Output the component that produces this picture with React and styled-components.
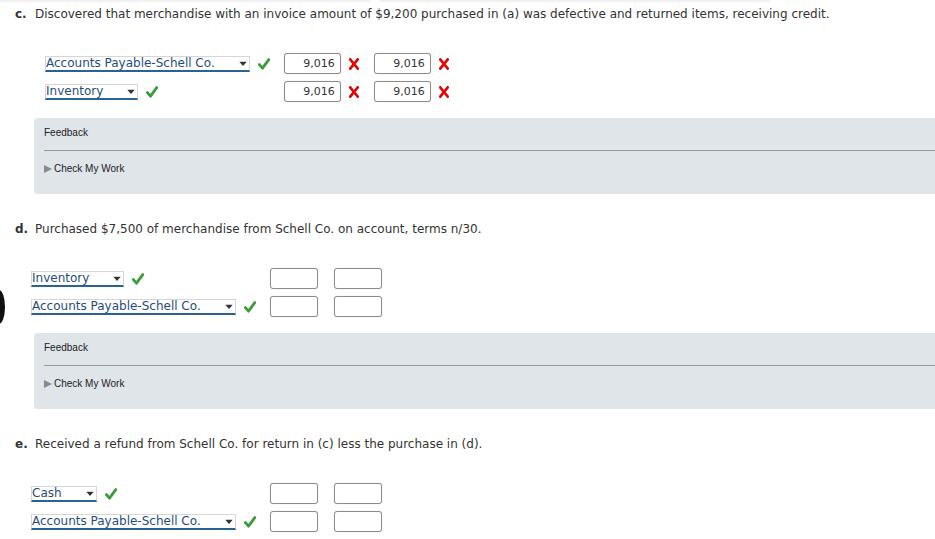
import React from 'react';
import styled, { createGlobalStyle } from 'styled-components';

const GlobalStyle = createGlobalStyle`
    html, body {
        margin: 0;
        padding: 0;
        background: #fff;
        overflow-x: hidden;
    }
    body {
        font-family: "DejaVu Sans", Verdana, sans-serif;
        color: #333;
    }
`;

const Page = styled.div`
    position: relative;
    padding-left: 15px;
    padding-bottom: 20px;
`;

const TopShade = styled.div`
    display: flex;
    gap: 10px;
    height: 3px;
    margin-left: -15px;

    span {
        display: block;
        height: 3px;
        background: linear-gradient(#ececec, #fff);
    }
`;

const Heading = styled.div`
    margin-top: ${(p) => p.$top}px;
    font-size: 12px;
    line-height: 16px;
    color: #333;
    white-space: nowrap;

    b {
        display: inline-block;
        width: 20px;
        font-weight: bold;
    }
`;

const Entries = styled.div`
    display: grid;
    grid-template-columns: auto auto auto;
    justify-content: start;
    align-items: center;
    column-gap: ${(p) => p.$gap}px;
    row-gap: 7px;
    margin-top: 31px;
    margin-left: ${(p) => p.$indent}px;
`;

const AccountCell = styled.div`
    display: flex;
    align-items: center;
    gap: 8px;
    height: 21px;
    margin-right: ${(p) => p.$pad}px;
`;

const Select = styled.div`
    position: relative;
    box-sizing: border-box;
    height: 16px;
    padding: 0 34px 0 0;
    border: 1px solid #d6d6d6;
    border-bottom: 2px solid #2a6292;
    font-size: 12px;
    line-height: 13px;
    color: #1f4d7d;
    white-space: nowrap;

    svg {
        position: absolute;
        right: 2px;
        top: 4px;
    }
`;

const AmountCell = styled.div`
    display: flex;
    align-items: center;
    gap: 8px;
`;

const Amount = styled.div`
    box-sizing: border-box;
    width: ${(p) => p.$w}px;
    height: 21px;
    border: 1px solid #8c8c8c;
    border-radius: 3px;
    box-shadow: 0 0 1px rgba(0, 0, 0, 0.25);
    background: #fff;
    padding-right: 5px;
    text-align: right;
    font-size: 11px;
    line-height: 19px;
    color: #333;
`;

const Feedback = styled.div`
    margin: 16px 0 0 19px;
    margin-right: -15px;
    height: 76px;
    box-sizing: border-box;
    padding: 9px 0 0 10px;
    background: #dfe5e9;
    border-radius: 4px 0 0 4px;
    font-family: "Liberation Sans", Arial, sans-serif;
    font-size: 10px;
    line-height: 12px;
    color: #222;
`;

const Rule = styled.div`
    height: 1px;
    margin-top: 11px;
    background: #959a9d;
`;

const CheckWork = styled.div`
    display: flex;
    align-items: center;
    margin-top: 12px;

    &::before {
        content: '';
        width: 0;
        height: 0;
        margin-right: 2px;
        border-top: 4px solid transparent;
        border-bottom: 4px solid transparent;
        border-left: 8px solid #8a8a8a;
    }
`;

const Bump = styled.div`
    position: absolute;
    left: -7px;
    top: 290px;
    width: 12px;
    height: 34px;
    border-radius: 50%;
    background: #111;
`;

const Arrow = () => (
    <svg width="8" height="6" viewBox="0 0 8 6">
        <path d="M0.5 1 H7.5 L4 5 Z" fill="#333" />
        <path d="M0.5 0.3 H7.5" stroke="#999" strokeWidth="0.6" />
    </svg>
);

const Check = () => (
    <svg width="12" height="12" viewBox="0 0 12 12">
        <path d="M1.4 6.6 L4.5 10.2 L10.8 1.6" fill="none" stroke="#3d9b3d" strokeWidth="2.8" strokeLinecap="round" strokeLinejoin="round" />
    </svg>
);

const Cross = () => (
    <svg width="10" height="12" viewBox="0 0 10 12">
        <path d="M1.3 1.5 L8.7 10.5 M8.7 1.5 L1.3 10.5" stroke="#e60000" strokeWidth="2.7" strokeLinecap="square" />
    </svg>
);

const EntryTable = ({ rows, indent, gap, inputW, value }) => {
    return (
        <Entries $indent={indent} $gap={gap}>
            {rows.map((acct) => (
                <React.Fragment key={acct}>
                    <AccountCell $pad={14 - gap}>
                        <Select>{acct}<Arrow /></Select>
                        <Check />
                    </AccountCell>
                    <AmountCell>
                        <Amount $w={inputW}>{value}</Amount>
                        {value && <Cross />}
                    </AmountCell>
                    <AmountCell>
                        <Amount $w={inputW}>{value}</Amount>
                        {value && <Cross />}
                    </AmountCell>
                </React.Fragment>
            ))}
        </Entries>
    );
};

const FeedbackBox = () => (
    <Feedback>
        <div>Feedback</div>
        <Rule />
        <CheckWork>Check My Work</CheckWork>
    </Feedback>
);

const App = () => {
    return (
        <Page>
            <GlobalStyle />
            <TopShade>
                <span style={{ width: 370 }} />
                <span style={{ width: 390 }} />
            </TopShade>

            <Heading $top={3}>
                <b>c.</b>Discovered that merchandise with an invoice amount of $9,200 purchased in (a) was defective and returned items, receiving credit.
            </Heading>
            <EntryTable
                rows={['Accounts Payable-Schell Co.', 'Inventory']}
                indent={30}
                gap={15}
                inputW={57}
                value="9,016"
            />
            <FeedbackBox />

            <Heading $top={27}>
                <b>d.</b>Purchased $7,500 of merchandise from Schell Co. on account, terms n/30.
            </Heading>
            <EntryTable
                rows={['Inventory', 'Accounts Payable-Schell Co.']}
                indent={16}
                gap={16}
                inputW={48}
                value=""
            />
            <FeedbackBox />

            <Heading $top={27}>
                <b>e.</b>Received a refund from Schell Co. for return in (c) less the purchase in (d).
            </Heading>
            <EntryTable
                rows={['Cash', 'Accounts Payable-Schell Co.']}
                indent={16}
                gap={16}
                inputW={48}
                value=""
            />

            <Bump />
        </Page>
    );
};

export default App;
